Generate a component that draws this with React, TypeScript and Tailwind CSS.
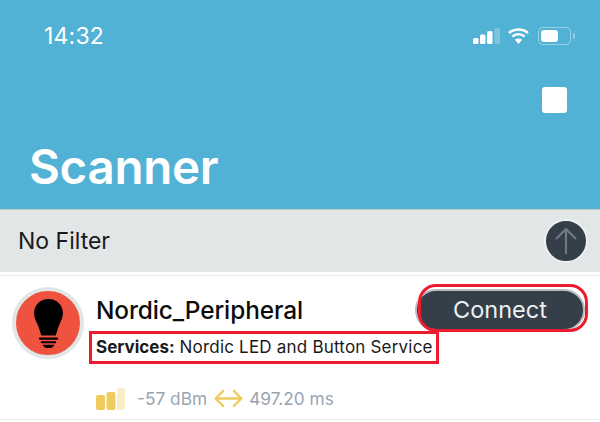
function StatusIcons() {
    return (
        <div className="flex items-center">
            <svg width="27" height="16" viewBox="0 0 27 16" fill="#fff">
                <rect x="0" y="10" width="5.500" height="6" rx="1.500" />
                <rect x="7" y="6.500" width="5.500" height="9.500" rx="1.500" />
                <rect x="14" y="3" width="5.500" height="13" rx="1.500" />
                <rect x="21.500" y="0" width="5.500" height="16" rx="1.500" fillOpacity="0.25" />
            </svg>
            <svg className="ml-[8px]" width="21" height="16" viewBox="0 0 21 16" fill="none" stroke="#fff" strokeWidth="2.500">
                <path d="M1 5C6.400 .4 14.600 .4 20 5" />
                <path d="M4.400 8.500C8 5.500 13 5.500 16.600 8.500" />
                <path d="M10.500 16 6.900 11.700C9 10.200 12 10.200 14.100 11.700Z" fill="#fff" stroke="none" />
            </svg>
            <div className="ml-[9px] flex items-center gap-[2px]">
                <div className="w-[33px] h-[18px] rounded-[5px] border border-white/40 p-[2px]">
                    <div className="w-[17px] h-full rounded-[3px] bg-white" />
                </div>
                <div className="w-[2px] h-[6px] rounded-r-full bg-white/40" />
            </div>
        </div>
    );
}

function BulbIcon() {
    return (
        <svg width="29" height="49" viewBox="0 0 30 51" fill="#000">
            <path d="M15 0C6.500 0 0 6.300 0 14.500c0 5.500 2.500 9.500 4.500 14L7.500 38h15l3-9.500C27.500 24 30 20 30 14.500 30 6.300 23.500 0 15 0Z" />
            <rect x="5" y="40" width="20" height="2.500" rx="1.200" />
            <rect x="7" y="44" width="16" height="2" rx="1" />
            <path d="M9 47.500h12C20.500 49.800 18 51 15 51s-5.500-1.200-6-3.500Z" />
        </svg>
    );
}

export default function App() {
    return (
        <div className="w-[600px] h-[422px] overflow-hidden bg-white flex flex-col font-['Inter',sans-serif]">
            <header className="h-[209px] shrink-0 bg-[#52b2d5] pl-[30px] pr-[25px] text-white flex flex-col">
                <div className="flex items-center justify-between pt-[26px] pl-[14px]">
                    <span className="text-[23px] leading-[20px] tracking-[0.2px]">14:32</span>
                    <StatusIcons />
                </div>
                <div className="flex justify-end mt-[41px] pr-[8px]">
                    <div className="w-[25px] h-[26px] rounded-[3px] bg-white" />
                </div>
                <h1 className="mt-[26px] -ml-[1px] text-[47.500px] leading-[56px] font-semibold tracking-[-0.3px]">Scanner</h1>
            </header>

            <div className="h-[63px] shrink-0 bg-[#e1e6e6] border-t border-[#bfc5c2] pl-[18px] pr-[12px] flex items-center justify-between">
                <span className="text-[23px] text-[#1a1a1a]">No Filter</span>
                <div className="w-[44px] h-[44px] rounded-full bg-[#353f4a] border-[2px] border-[#eef0f2] flex items-center justify-center">
                    <svg width="24" height="28" viewBox="0 0 24 28" fill="none" stroke="#6f7a85" strokeWidth="2.200">
                        <path d="M12 27V2M2 12 12 2l10 10" />
                    </svg>
                </div>
            </div>

            <div className="h-[3px] shrink-0 bg-white" />
            <div className="relative flex-1 border-t border-[#e8ecec] mb-[2px] border-b flex pl-[12px]">
                <div className="mt-[11px] w-[72px] h-[72px] shrink-0 rounded-full bg-[#ef5340] border-[4px] border-[#e1e6e6] flex items-center justify-center">
                    <BulbIcon />
                </div>
                <div className="ml-[12px] flex flex-col items-start">
                    <div className="mt-[19px] text-[24.400px] leading-[30px] font-medium text-[#0c0c0c] tracking-[-0.1px]">Nordic_Peripheral</div>
                    <div className="mt-[6px] -ml-[7px] h-[33px] w-[350px] border-[3px] border-[#ec1c2e] pl-[4px] flex items-center text-[17px] text-[#1a1a1a] whitespace-nowrap">
                        <span className="font-bold mr-[5px]">Services:</span>
                        <span className="tracking-[0.2px]">Nordic LED and Button Service</span>
                    </div>
                    <div className="mt-[22px] flex items-center text-[17.300px] text-[#97a5b2] whitespace-nowrap">
                        <svg width="29" height="22" viewBox="0 0 29 22" fill="#eecb5c">
                            <rect x="0" y="7" width="9" height="15" rx="2" />
                            <rect x="10.500" y="4" width="9" height="18" rx="2" />
                            <rect x="21" y="0" width="8" height="22" rx="2" fillOpacity="0.35" />
                        </svg>
                        <span className="ml-[12px]">-57 dBm</span>
                        <svg className="ml-[7px]" width="29" height="19" viewBox="0 0 30 20" fill="none" stroke="#eecb5c" strokeWidth="2.400">
                            <path d="M1.500 10h27M10 1.500 1.500 10l8.500 8.500M20 1.500l8.500 8.500-8.500 8.500" />
                        </svg>
                        <span className="ml-[6px]">497.20 ms</span>
                    </div>
                </div>
                <div className="absolute left-[415px] top-[13px] w-[170px] h-[42px] rounded-full bg-[#353f4a] border-[2px] border-[#b5bbbf] flex items-center justify-center text-[23.500px] text-[#eef0f2]">
                    Connect
                </div>
                <div className="absolute left-[418px] top-[8px] w-[170px] h-[48px] rounded-[18px] border-[3px] border-[#ec1c2e]" />
            </div>
        </div>
    );
}
